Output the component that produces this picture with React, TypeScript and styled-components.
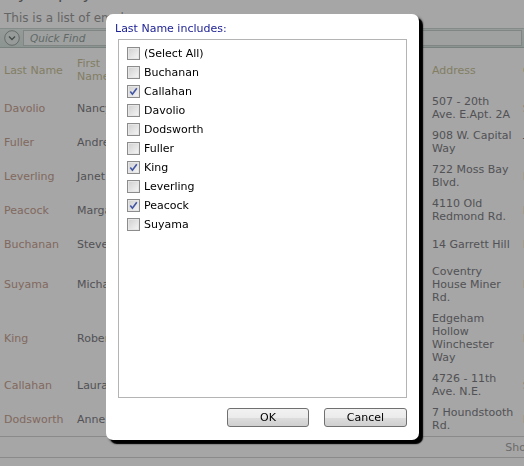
import React from 'react'
import styled, { createGlobalStyle } from 'styled-components'

const GlobalStyle = createGlobalStyle`
  html, body {
    margin: 0;
    padding: 0;
    background: #fff;
    overflow: hidden;
  }
  body {
    font-family: "DejaVu Sans", Verdana, sans-serif;
    font-size: 11px;
  }
`

const Page = styled.div`
  width: 100%;
`

const Heading = styled.h1`
  margin: -16px 0 0 4px;
  font-size: 16px;
  line-height: 19px;
  font-weight: normal;
  color: #777;
`

const Description = styled.p`
  margin: 8px 0 0 4px;
  font-size: 12px;
  line-height: 15px;
  color: #9c9c9c;
  white-space: nowrap;
`

const Toolbar = styled.div`
  display: flex;
  align-items: center;
  gap: 3px;
  height: 18px;
  margin-top: 2px;
  padding: 0 2px 0 4px;
  background: linear-gradient(#e4eeea, #d8e4e0);
  border-top: 1px solid #cbd6d2;
  border-bottom: 1px solid #bac6c2;
`

const FindInput = styled.input`
  flex: 1;
  height: 16px;
  box-sizing: border-box;
  padding: 0 6px;
  border: 1px solid #c3cecb;
  background: #f3f7f6;
  font: italic 10.5px "DejaVu Sans", Verdana, sans-serif;
  outline: none;
  &::placeholder {
    color: #95a29e;
  }
`

const Grid = styled.table`
  border-collapse: collapse;
  table-layout: fixed;
  width: 611px;
`

const HeadCell = styled.th`
  padding: 9px 4px 8px;
  text-align: left;
  font-weight: normal;
  line-height: 13px;
  color: #c9c299;
  vertical-align: middle;
`

const Cell = styled.td<{ $tone?: 'name' | 'plain' }>`
  padding: 4px;
  line-height: 13px;
  vertical-align: middle;
  color: ${p => (p.$tone === 'name' ? '#c8a292' : '#7e7e84')};
`

const FooterCell = styled.td`
  padding: 4px 6px 3px;
  line-height: 13px;
  text-align: right;
  white-space: nowrap;
  color: #a6a6a6;
  border-top: 1px solid #d4d4d4;
  border-bottom: 1px solid #d4d4d4;
`

const Overlay = styled.div`
  position: fixed;
  inset: 0;
  background: rgba(0, 0, 0, 0.35);
`

const Dialog = styled.div`
  position: fixed;
  left: 106px;
  top: 14px;
  width: 313px;
  height: 426px;
  box-sizing: border-box;
  display: flex;
  flex-direction: column;
  padding: 8px 0 13px;
  background: #fff;
  border-radius: 7px;
  box-shadow: 4px 4px 1px #000, 3px 3px 3px rgba(0, 0, 0, 0.7);
`

const DialogTitle = styled.div`
  padding: 0 9px;
  margin-bottom: 4px;
  line-height: 13px;
  color: #1f2396;
`

const ListBox = styled.div`
  flex: 1;
  margin: 0 12px;
  padding: 4px 0 0 8px;
  border: 1px solid #b4b4b4;
`

const Item = styled.label`
  display: flex;
  align-items: center;
  gap: 4px;
  height: 19px;
  color: #000;
  line-height: 13px;
`

const Box = styled.span`
  position: relative;
  width: 13px;
  height: 13px;
  box-sizing: border-box;
  border: 1px solid #8c8c8c;
  background: linear-gradient(135deg, #cfcfcf, #f6f6f6);
  box-shadow: inset 0 0 0 1px #e6e6e6;
  svg {
    position: absolute;
    left: 1px;
    top: 1px;
  }
`

const Buttons = styled.div`
  display: flex;
  justify-content: flex-end;
  gap: 15px;
  margin-top: 10px;
  padding: 0 12px;
`

const Button = styled.button<{ $w: number }>`
  width: ${p => p.$w}px;
  height: 19px;
  padding: 0;
  border: 1px solid #707070;
  border-radius: 3px;
  background: linear-gradient(#f2f2f2 0%, #ebebeb 50%, #dddddd 51%, #cfcfcf 100%);
  font: 11px "DejaVu Sans", Verdana, sans-serif;
  color: #000;
`

const CheckBox = ({ checked }: { checked: boolean }) => (
  <Box>
    {checked && (
      <svg width="9" height="9" viewBox="0 0 9 9">
        <path d="M1.3 4.6 L3.4 7.2 L7.8 1.2" fill="none" stroke="#4255a3" strokeWidth="1.6" />
      </svg>
    )}
  </Box>
)

const ChevronButton = () => (
  <svg width="16" height="16" viewBox="0 0 16 16">
    <circle cx="8" cy="8" r="7.3" fill="#e9f0ee" stroke="#9aa6a2" />
    <path d="M5 6.6 L8 9.6 L11 6.6" fill="none" stroke="#6c7874" strokeWidth="1.4" />
  </svg>
)

const t = ' 12:00:00 AM'
const employees = [
  ['Davolio', 'Nancy', 'Sales Representative', '12/8/1948', '5/1/1992', '507 - 20th Ave. E.Apt. 2A', 'Seattle'],
  ['Fuller', 'Andrew', 'Vice President, Sales', '2/19/1952', '8/14/1992', '908 W. Capital Way', 'Tacoma'],
  ['Leverling', 'Janet', 'Sales Representative', '8/30/1963', '4/1/1992', '722 Moss Bay Blvd.', 'Kirkland'],
  ['Peacock', 'Margaret', 'Sales Representative', '9/19/1937', '5/3/1993', '4110 Old Redmond Rd.', 'Redmond'],
  ['Buchanan', 'Steven', 'Sales Manager', '3/4/1955', '10/17/1993', '14 Garrett Hill', 'London'],
  ['Suyama', 'Michael', 'Sales Representative', '7/2/1963', '10/17/1993', 'Coventry House Miner Rd.', 'London'],
  ['King', 'Robert', 'Sales Representative', '5/29/1960', '1/2/1994', 'Edgeham Hollow Winchester Way', 'London'],
  ['Callahan', 'Laura', 'Inside Sales Coordinator', '1/9/1958', '3/5/1994', '4726 - 11th Ave. N.E.', 'Seattle'],
  ['Dodsworth', 'Anne', 'Sales Representative', '1/27/1966', '11/15/1994', '7 Houndstooth Rd.', 'London'],
]

const filterItems: [string, boolean][] = [
  ['(Select All)', false],
  ['Buchanan', false],
  ['Callahan', true],
  ['Davolio', false],
  ['Dodsworth', false],
  ['Fuller', false],
  ['King', true],
  ['Leverling', false],
  ['Peacock', true],
  ['Suyama', false],
]

const widths = [73, 62, 105, 96, 92, 91, 92]

export default function App() {
  return (
    <>
      <GlobalStyle />
      <Page>
        <Heading>My Employees</Heading>
        <Description>This is a list of employees.</Description>
        <Toolbar>
          <ChevronButton />
          <FindInput placeholder="Quick Find" />
        </Toolbar>
        <Grid>
          <colgroup>
            {widths.map((w, i) => (
              <col key={i} style={{ width: w }} />
            ))}
          </colgroup>
          <thead>
            <tr>
              <HeadCell>Last Name</HeadCell>
              <HeadCell>First Name</HeadCell>
              <HeadCell>Title</HeadCell>
              <HeadCell>Birth Date</HeadCell>
              <HeadCell>Hire Date</HeadCell>
              <HeadCell>Address</HeadCell>
              <HeadCell>City</HeadCell>
            </tr>
          </thead>
          <tbody>
            {employees.map(e => (
              <tr key={e[0]}>
                <Cell $tone="name">{e[0]}</Cell>
                <Cell>{e[1]}</Cell>
                <Cell>{e[2]}</Cell>
                <Cell>{e[3] + t}</Cell>
                <Cell>{e[4] + t}</Cell>
                <Cell>{e[5]}</Cell>
                <Cell>{e[6]}</Cell>
              </tr>
            ))}
          </tbody>
          <tfoot>
            <tr>
              <FooterCell colSpan={7}>Showing 1 - 9 of 9</FooterCell>
            </tr>
          </tfoot>
        </Grid>
      </Page>
      <Overlay />
      <Dialog>
        <DialogTitle>Last Name includes:</DialogTitle>
        <ListBox>
          {filterItems.map(([name, checked]) => (
            <Item key={name}>
              <CheckBox checked={checked} />
              {name}
            </Item>
          ))}
        </ListBox>
        <Buttons>
          <Button $w={82}>OK</Button>
          <Button $w={83}>Cancel</Button>
        </Buttons>
      </Dialog>
    </>
  )
}
